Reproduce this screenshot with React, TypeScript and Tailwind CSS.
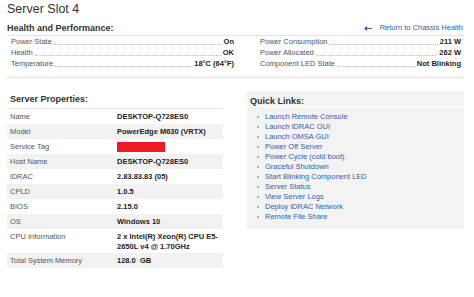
import React from 'react';

const health = [
  { label: 'Power State', value: 'On' },
  { label: 'Health', value: 'OK' },
  { label: 'Temperature', value: '18°C (64°F)' },
];

const power = [
  { label: 'Power Consumption', value: '211 W' },
  { label: 'Power Allocated', value: '262 W' },
  { label: 'Component LED State', value: 'Not Blinking' },
];

const props: { label: string; value: React.ReactNode; tall?: boolean }[] = [
  { label: 'Name', value: 'DESKTOP-Q728ES0' },
  { label: 'Model', value: 'PowerEdge M630 (VRTX)' },
  { label: 'Service Tag', value: <span className="block w-[48px] h-[10px] bg-[#ed1c24]" /> },
  { label: 'Host Name', value: 'DESKTOP-Q728ES0' },
  { label: 'iDRAC', value: '2.83.83.83 (05)' },
  { label: 'CPLD', value: '1.0.5' },
  { label: 'BIOS', value: '2.15.0' },
  { label: 'OS', value: 'Windows 10' },
  { label: 'CPU Information', value: <>2 x Intel(R) Xeon(R) CPU E5-<br />2650L v4 @ 1.70GHz</>, tall: true },
  { label: 'Total System Memory', value: '128.0  GB' },
];

const links = [
  'Launch Remote Console',
  'Launch iDRAC GUI',
  'Launch OMSA GUI',
  'Power Off Server',
  'Power Cycle (cold boot)',
  'Graceful Shutdown',
  'Start Blinking Component LED',
  'Server Status',
  'View Server Logs',
  'Deploy iDRAC Network',
  'Remote File Share',
];

const LeaderRow = ({ label, value }: { label: string; value: string }) => (
  <div className="flex items-end h-[11px] leading-[11px]">
    <span className="text-[#555]">{label}</span>
    <span className="flex-1 mx-[2px] mb-[2px] border-b border-dotted border-[#bbb]" />
    <span className="font-bold text-[#222]">{value}</span>
  </div>
);

export default function App() {
  return (
    <div className="w-[474px] h-[297px] bg-white pl-[7px] pr-[10px] font-['Liberation_Sans',Arial,sans-serif] text-[7.5px] text-[#333] whitespace-pre">
      <h1 className="pt-[2px] text-[12.5px] leading-[14px] text-[#333]">Server Slot 4</h1>

      {/* Health and Performance */}
      <div className="mt-[6px] flex items-center justify-between h-[12px]">
        <h2 className="text-[9px] leading-[10px] font-bold text-[#333]">Health and Performance:</h2>
        <a className="flex items-center gap-[8px] text-[#2f62b0] pr-[1px]">
          <svg width="8" height="5" viewBox="0 0 8 5">
            <path d="M0 2.5 L3 0 L3 2 L8 2 L8 3 L3 3 L3 5 Z" fill="#2f62b0" />
          </svg>
          <span>Return to Chassis Health</span>
        </a>
      </div>

      <div className="mt-[1px] border-t border-[#e3e3e3] pl-[4px] pr-[3px] flex">
        <div className="w-[223px]">
          {health.map(r => <LeaderRow key={r.label} {...r} />)}
        </div>
        <div className="ml-[26px] flex-1">
          {power.map(r => <LeaderRow key={r.label} {...r} />)}
        </div>
      </div>
      <div className="mt-[7px] h-[3px] bg-[#efefef]" />

      {/* Lower panels */}
      <div className="mt-[12px] flex items-start">
        <div className="w-[216px]">
          <div className="h-[18px] pl-[3px] pt-[3px] leading-[10px] border-b border-[#e6e6e6] text-[9px] font-bold text-[#333]">
            Server Properties:
          </div>
          {props.map((p, i) => (
            <div
              key={p.label}
              className={`flex ${p.tall ? 'h-[24px] items-start pt-[3px] leading-[10px]' : 'h-[15px] items-center'} ${i % 2 === 1 ? 'bg-[#f2f2f2]' : 'bg-white'}`}
            >
              <span className="w-[110px] pl-[3px] text-[#555]">{p.label}</span>
              <span className="font-bold text-[#222]">{p.value}</span>
            </div>
          ))}
        </div>

        <div className="ml-[24px] flex-1 bg-[#f3f3f3] pb-[7px]">
          <div className="h-[16px] pl-[3px] pt-[5px] leading-[10px] border-b border-white text-[9px] font-bold text-[#333]">
            Quick Links:
          </div>
          <ul className="mt-[5px]">
            {links.map(l => (
              <li key={l} className="flex items-center h-[10px] pl-[10px]">
                <span className="w-[2px] h-[2px] rounded-full bg-[#7d9ccc] mr-[6px]" />
                <a className="text-[#2f62b0]">{l}</a>
              </li>
            ))}
          </ul>
        </div>
      </div>
    </div>
  );
}
